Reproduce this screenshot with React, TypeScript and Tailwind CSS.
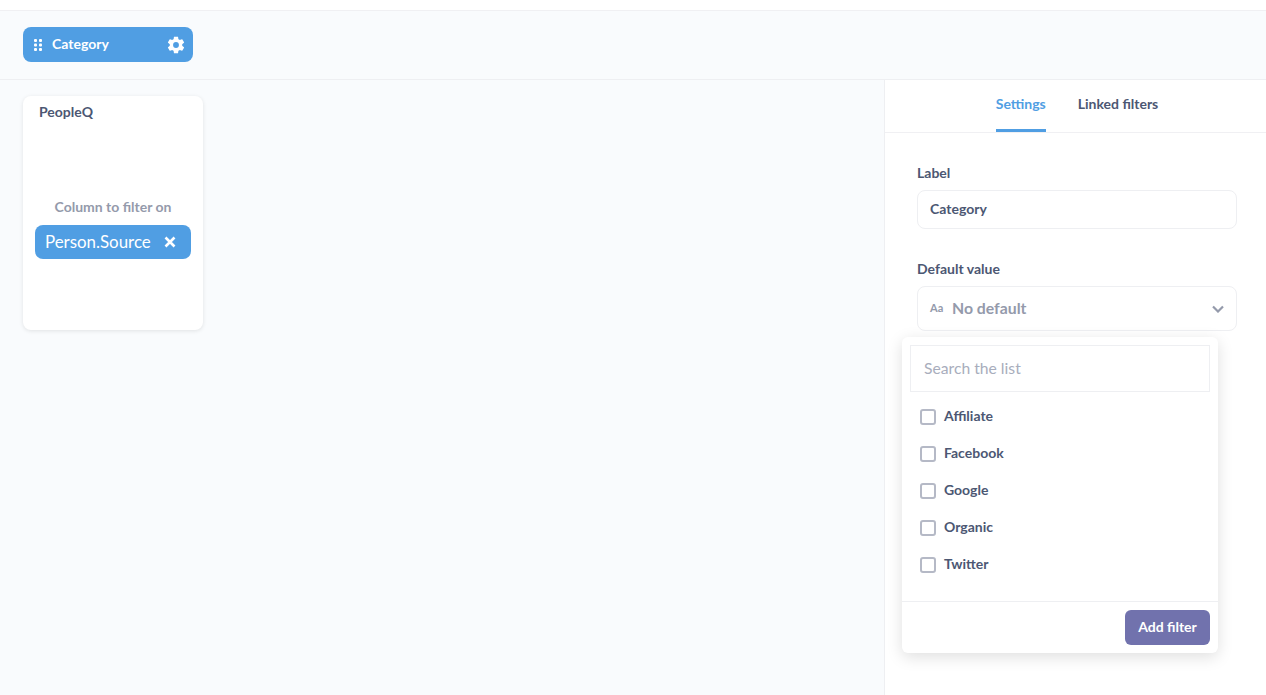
import React from 'react';

const options = ['Affiliate', 'Facebook', 'Google', 'Organic', 'Twitter'];

const GearIcon = () => (
  <svg viewBox="0 0 24 24" className="w-[20px] h-[20px]" fill="currentColor">
    <path fillRule="evenodd" d="M19.43 12.98c.04-.32.07-.64.07-.98s-.03-.66-.07-.98l2.11-1.65c.19-.15.24-.42.12-.64l-2-3.46c-.12-.22-.39-.3-.61-.22l-2.49 1c-.52-.4-1.08-.73-1.69-.98l-.38-2.65C14.46 2.18 14.25 2 14 2h-4c-.25 0-.46.18-.49.42l-.38 2.65c-.61.25-1.17.59-1.69.98l-2.49-1c-.23-.09-.49 0-.61.22l-2 3.46c-.13.22-.07.49.12.64l2.11 1.65c-.04.32-.07.65-.07.98s.03.66.07.98l-2.11 1.65c-.19.15-.24.42-.12.64l2 3.46c.12.22.39.3.61.22l2.49-1c.52.4 1.08.73 1.69.98l.38 2.65c.03.24.24.42.49.42h4c.25 0 .46-.18.49-.42l.38-2.65c.61-.25 1.17-.59 1.69-.98l2.49 1c.23.09.49 0 .61-.22l2-3.46c.12-.22.07-.49-.12-.64l-2.11-1.65zM12 15.5a3.5 3.5 0 1 1 0-7 3.5 3.5 0 0 1 0 7z" />
  </svg>
);

const GripIcon = () => (
  <svg viewBox="0 0 8 12" className="w-[8px] h-[12px]" fill="currentColor">
    <rect x="0" y="0" width="3" height="3" rx="1" />
    <rect x="5" y="0" width="3" height="3" rx="1" />
    <rect x="0" y="4.5" width="3" height="3" rx="1" />
    <rect x="5" y="4.5" width="3" height="3" rx="1" />
    <rect x="0" y="9" width="3" height="3" rx="1" />
    <rect x="5" y="9" width="3" height="3" rx="1" />
  </svg>
);

const CloseIcon = () => (
  <svg viewBox="0 0 12 12" className="w-[12px] h-[12px]" fill="none" stroke="currentColor" strokeWidth="2.6">
    <path d="M1.5 1.5l9 9M10.5 1.5l-9 9" />
  </svg>
);

const ChevronIcon = () => (
  <svg viewBox="0 0 12 8" className="w-[12px] h-[8px]" fill="none" stroke="currentColor" strokeWidth="2.2">
    <path d="M1 1.5l5 5 5-5" />
  </svg>
);

const App: React.FC = () => {
  return (
    <div className="relative h-[695px] w-[1266px] overflow-hidden bg-white font-['Lato',sans-serif] text-[#4c5773]">
      <div className="h-[11px] border-b border-[#f0f0f3] bg-white"></div>

      {/* Parameter bar */}
      <div className="h-[69px] border-b border-[#eeeff2] bg-[#f9fbfd] pl-[23px] pt-[16px]">
        <div className="flex h-[35px] w-[170px] items-center rounded-[8px] bg-[#509ee3] pl-[11px] pr-[7px] text-white">
          <GripIcon />
          <span className="ml-[10px] flex-1 pb-[2px] text-[14px] font-bold">Category</span>
          <GearIcon />
        </div>
      </div>

      <div className="flex h-[615px]">
        {/* Dashboard canvas */}
        <div className="flex-1 bg-[#f9fbfd] pl-[23px] pt-[16px]">
          <div className="flex h-[234px] w-[180px] flex-col rounded-[8px] bg-white shadow-[0_1px_4px_rgba(0,0,0,0.1)]">
            <div className="pl-[16px] pt-[7px] text-[14px] leading-[17px] font-bold">PeopleQ</div>
            <div className="mt-[79px] text-center text-[14px] leading-[16px] font-bold text-[#949aab]">Column to filter on</div>
            <div className="mx-[12px] mt-[10px] flex h-[34px] items-center justify-between rounded-[8px] bg-[#509ee3] pl-[10px] pr-[15px] text-white">
              <span className="text-[16.9px]">Person.Source</span>
              <CloseIcon />
            </div>
          </div>
        </div>

        {/* Settings sidebar */}
        <div className="w-[382px] border-l border-[#eeeff2] bg-white">
          <div className="flex h-[53px] justify-center gap-[32px] border-b border-[#f0f0f3] pl-[3px] text-[14px] font-bold">
            <div className="h-[52px] border-b-[3px] border-[#509ee3] pt-[15px] leading-[17px] text-[#509ee3]">Settings</div>
            <div className="pt-[15px] leading-[17px]">Linked filters</div>
          </div>
          <div className="px-[32px] pt-[31px]">
            <div className="text-[14px] leading-[17px] font-bold">Label</div>
            <div className="mt-[9px] flex h-[39px] w-[320px] items-center rounded-[8px] border border-[#eeeff2] pb-[2px] pl-[12px] text-[14px] font-bold">Category</div>
            <div className="mt-[31px] text-[14px] leading-[17px] font-bold">Default value</div>
            <div className="mt-[9px] flex h-[45px] w-[320px] items-center rounded-[8px] border border-[#eeeff2] pl-[12px] pr-[12px] font-bold text-[#949aab]">
              <span className="w-[22px] text-[11px]">Aa</span>
              <span className="flex-1 pb-[2px] text-[15.8px]">No default</span>
              <ChevronIcon />
            </div>
          </div>
        </div>
      </div>

      {/* Dropdown popover */}
      <div className="absolute top-[337px] left-[902px] w-[316px] rounded-[6px] bg-white shadow-[0_4px_16px_rgba(0,0,0,0.13)]">
        <div className="px-[8px] pt-[8px]">
          <div className="flex h-[47px] w-[300px] items-center border border-[#eeeff2] pl-[13px] text-[15.7px] text-[#a8adbc]">Search the list</div>
        </div>
        <div className="pt-[6px] pb-[18px]">
          {options.map((option) => (
            <div key={option} className="flex h-[37px] items-center pl-[18px]">
              <div className="h-[16px] w-[16px] rounded-[3px] border-2 border-[#b5b9c6]"></div>
              <span className="ml-[8px] pb-[2px] text-[14px] font-bold">{option}</span>
            </div>
          ))}
        </div>
        <div className="flex justify-end border-t border-[#eeeff2] p-[8px]">
          <div className="flex h-[35px] w-[85px] items-center justify-center rounded-[6px] bg-[#7172ad] pb-[2px] text-[14px] font-bold text-white">Add filter</div>
        </div>
      </div>
    </div>
  );
};

export default App;
